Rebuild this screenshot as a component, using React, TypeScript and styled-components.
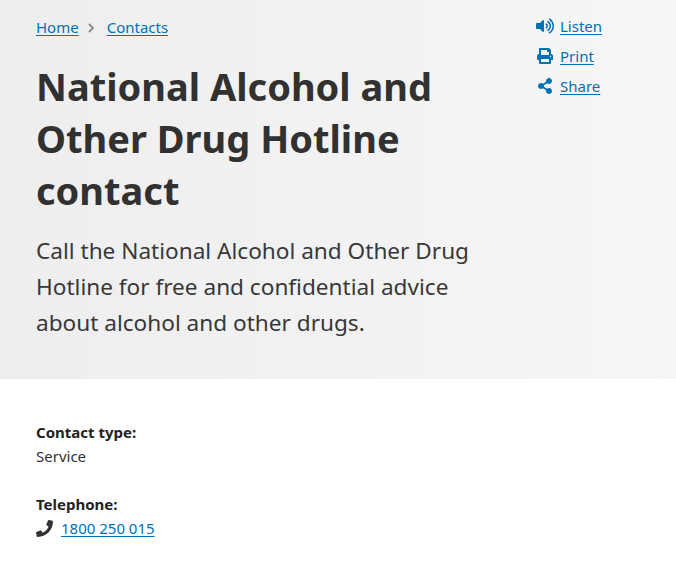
import { ReactNode } from "react";
import styled, { createGlobalStyle } from "styled-components";
import { FaPhone, FaPrint, FaShareAlt, FaVolumeUp } from "react-icons/fa";

const GlobalStyle = createGlobalStyle`
  html, body { margin: 0; padding: 0; background: #fff; }
  body {
    font-family: "Noto Sans", "Open Sans", sans-serif;
    color: #313131;
  }
`;

const Hero = styled.header`
  height: 379px;
  box-sizing: border-box;
  padding: 16px 36px 0;
  display: flex;
  background: linear-gradient(90deg, #eeeeee 0%, #f6f6f6 100%);
`;

const HeroMain = styled.div`
  width: 445px;
`;

const Crumbs = styled.nav`
  display: flex;
  align-items: center;
  height: 22px;
  font-size: 15px;
`;

const Sep = styled.span`
  width: 25px;
  margin-right: 3px;
  display: flex;
  justify-content: center;
  padding-top: 2px;
  color: #8a8a8a;
`;

const A = styled.a`
  color: #0071b3;
  text-decoration: underline;
  text-underline-offset: 2px;
`;

const Title = styled.h1`
  margin: 22px 0 0;
  font-size: 38px;
  line-height: 52px;
  font-weight: 700;
  color: #313131;
`;

const Lead = styled.p`
  margin: 17px 0 0;
  font-size: 22.6px;
  line-height: 36px;
  font-weight: 400;
  color: #383838;
`;

const Actions = styled.ul`
  list-style: none;
  margin: -5px 0 0 54px;
  padding: 0;
  display: flex;
  flex-direction: column;
`;

const Action = styled.li`
  height: 30px;
  display: flex;
  align-items: center;
  gap: 6px;
  font-size: 15px;
  color: #0071b3;
`;

const ActionIcon = styled.span`
  width: 19px;
  display: flex;
  justify-content: center;
`;

const Details = styled.section`
  padding: 41px 36px 0;
  font-size: 15px;
  line-height: 24px;
`;

const Field = styled.div`
  margin-bottom: 24px;
`;

const Label = styled.div`
  font-weight: 700;
  color: #222;
`;

const PhoneRow = styled.div`
  display: flex;
  align-items: center;
  gap: 8px;
  color: #313131;
`;

function ActionLink({ icon, label }: { icon: ReactNode; label: string }) {
  return (
    <Action>
      <ActionIcon>{icon}</ActionIcon>
      <A href="#">{label}</A>
    </Action>
  );
}

export default function App() {
  return (
    <>
      <GlobalStyle />
      <Hero>
        <HeroMain>
          <Crumbs>
            <A href="#">Home</A>
            <Sep>
              <svg width="6" height="10" viewBox="0 0 6 10">
                <path d="M1 1l4 4-4 4" fill="none" stroke="currentColor" strokeWidth="1.8" />
              </svg>
            </Sep>
            <A href="#">Contacts</A>
          </Crumbs>
          <Title>National Alcohol and Other Drug Hotline contact</Title>
          <Lead>
            Call the National Alcohol and Other Drug Hotline for free and
            confidential advice about alcohol and other drugs.
          </Lead>
        </HeroMain>
        <Actions>
          <ActionLink icon={<FaVolumeUp size={18} />} label="Listen" />
          <ActionLink icon={<FaPrint size={16} />} label="Print" />
          <ActionLink icon={<FaShareAlt size={16} />} label="Share" />
        </Actions>
      </Hero>
      <Details>
        <Field>
          <Label>Contact type:</Label>
          <div>Service</div>
        </Field>
        <Field>
          <Label>Telephone:</Label>
          <PhoneRow>
            <FaPhone size={17} />
            <A href="#">1800 250 015</A>
          </PhoneRow>
        </Field>
      </Details>
    </>
  );
}
